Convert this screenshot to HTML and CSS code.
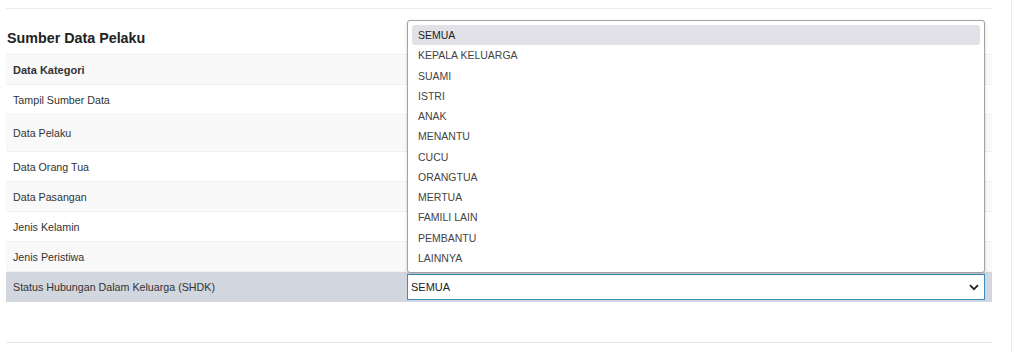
FILE: index.html
```html
<!DOCTYPE html>
<html lang="id">
<head>
<meta charset="utf-8">
<title>Sumber Data Pelaku</title>
<link rel="stylesheet" href="styles.css">
</head>
<body>
<div class="page">
  <div class="panel">
    <h3 class="title">Sumber Data Pelaku</h3>
    <table class="grid">
      <thead>
        <tr class="head"><th>Data Kategori</th><th></th></tr>
      </thead>
      <tbody>
        <tr class="row"><td>Tampil Sumber Data</td><td><div class="select"></div></td></tr>
        <tr class="row tall"><td>Data Pelaku</td><td><div class="select"></div></td></tr>
        <tr class="row"><td>Data Orang Tua</td><td><div class="select"></div></td></tr>
        <tr class="row"><td>Data Pasangan</td><td><div class="select"></div></td></tr>
        <tr class="row"><td>Jenis Kelamin</td><td><div class="select"></div></td></tr>
        <tr class="row"><td>Jenis Peristiwa</td><td><div class="select"></div></td></tr>
        <tr class="row active"><td>Status Hubungan Dalam Keluarga (SHDK)</td><td>
          <div class="select focus">SEMUA
            <svg class="chev" width="10" height="7" viewBox="0 0 10 7"><path d="M1 1.2 L5 5.2 L9 1.2" fill="none" stroke="#222" stroke-width="1.8"/></svg>
          </div>
        </td></tr>
      </tbody>
    </table>
    <ul class="dropdown">
      <li class="sel">SEMUA</li>
      <li>KEPALA KELUARGA</li>
      <li>SUAMI</li>
      <li>ISTRI</li>
      <li>ANAK</li>
      <li>MENANTU</li>
      <li>CUCU</li>
      <li>ORANGTUA</li>
      <li>MERTUA</li>
      <li>FAMILI LAIN</li>
      <li>PEMBANTU</li>
      <li>LAINNYA</li>
    </ul>
  </div>
</div>
</body>
</html>
```

FILE: styles.css
```css
html, body {
  margin: 0;
  padding: 0;
  background: #fff;
}
body {
  font-family: "Liberation Sans", Arial, sans-serif;
  color: #333;
  font-size: 10.7px;
}
.page {
  width: 1012px;
  height: 353px;
  border-right: 1px solid #ececec;
  box-sizing: border-box;
}
.panel {
  position: relative;
  margin-left: 6px;
  width: 986px;
  padding-top: 8px;
  border-bottom: 1px solid #e8e8e8;
  padding-bottom: 40px;
}
.panel::before {
  content: "";
  display: block;
  border-top: 1px solid #ececec;
}
.title {
  margin: 0;
  padding: 21px 0 0 1px;
  height: 24px;
  font-size: 14.3px;
  font-weight: bold;
  color: #222;
}
.grid {
  width: 100%;
  border-collapse: collapse;
  table-layout: fixed;
}
.grid th, .grid td {
  padding: 0 0 0 7px;
  text-align: left;
  vertical-align: middle;
}
.grid th:first-child, .grid td:first-child { width: 394px; }
.grid td:last-child, .grid th:last-child { padding-left: 0; padding-right: 7px; }
.head { height: 30px; background: #f9f9f9; border-top: 1px solid #f0f0f0; }
.head th { font-weight: bold; color: #333; font-size: 11px; }
.row { height: 30px; border-top: 1px solid #f0f0f0; }
.row:nth-child(even) { background: #f9f9f9; }
.row.tall { height: 37px; }
.row.active { background: #d2d6de; height: 30px; }
.select {
  position: relative;
  height: 24px;
  line-height: 24px;
  border: 1px solid #d2d6de;
  background: #fff;
  padding-left: 3px;
  font-size: 11px;
  color: #222;
  box-sizing: content-box;
}
.select.focus { border-color: #3c8dbc; }
.chev {
  position: absolute;
  right: 5px;
  top: 9px;
}
.dropdown {
  position: absolute;
  left: 401px;
  top: 20px;
  width: 568px;
  margin: 0;
  padding: 4px 4px 4px;
  list-style: none;
  background: #fff;
  border: 1px solid #a3a3a3;
  border-radius: 3px;
  box-shadow: 0 1px 3px rgba(0,0,0,0.18);
}
.dropdown li {
  height: 20.25px;
  line-height: 20px;
  padding-left: 6px;
  font-size: 10.5px;
  color: #444;
}
.dropdown li.sel {
  background: #e1e1e7;
  border-radius: 3px;
  color: #222;
}
```
